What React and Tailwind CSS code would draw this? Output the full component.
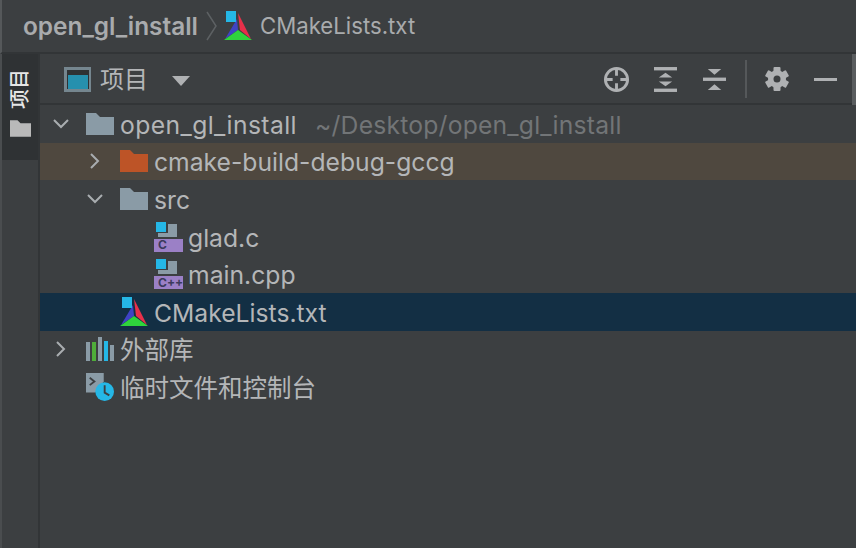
const cjk = '"Inter", "Noto Sans CJK SC", sans-serif';

function Chevron({ open }) {
  return (
    <svg width="18" height="18" viewBox="0 0 18 18" fill="none" stroke="#a9adb0" strokeWidth="2">
      {open ? <path d="M2 5l7 7 7-7" /> : <path d="M5 2l7 7-7 7" />}
    </svg>
  );
}

function Folder({ color = "#8a9ba6", w = 28, h = 22 }) {
  return (
    <svg width={w} height={h} viewBox="0 0 28 22">
      <path d="M0 0h10l4 4h14v18H0z" fill={color} />
    </svg>
  );
}

function CMakeIcon() {
  return (
    <svg width="28" height="30" viewBox="0 0 28 30">
      <path d="M13 8l1 11L1 28z" fill="#3f43c4" />
      <path d="M14 2l13 26-11-9z" fill="#e8304a" />
      <path d="M0 29l14-10 14 10z" fill="#2fd43c" />
      <rect x="2" y="0" width="10" height="11" fill="#25b7e6" />
    </svg>
  );
}

function SourceIcon({ label }) {
  return (
    <div className="relative w-[30px] h-[32px] top-[1px]">
      <div className="absolute left-[14px] top-[2px] w-[9px] h-[13px] bg-[#8a9ba6]" />
      <div className="absolute left-[4px] top-[11px] w-[19px] h-[4px] bg-[#8a9ba6]" />
      <div className="absolute left-[2px] top-0 w-[10px] h-[10px] bg-[#25b7e6]" />
      <div className="absolute left-0 top-[17px] w-[29px] h-[13px] bg-[#9b80c6] flex items-center pl-[4px] text-[12px] leading-none font-bold text-[#3b3a5c]">
        {label}
      </div>
    </div>
  );
}

function Gear() {
  return (
    <svg width="24" height="24" viewBox="0 0 24 24">
      <g fill="#afb1b3">
        <rect x="8.500" y="0" width="7" height="24" rx="1" />
        <rect x="8.500" y="0" width="7" height="24" rx="1" transform="rotate(60 12 12)" />
        <rect x="8.500" y="0" width="7" height="24" rx="1" transform="rotate(120 12 12)" />
        <circle cx="12" cy="12" r="9" />
      </g>
      <circle cx="12" cy="12" r="3.500" fill="#3c3f41" />
    </svg>
  );
}

function Row({ indent, chevron, icon, bg, children }) {
  return (
    <div className={`flex items-center h-[37.6px] ${bg || ""}`} style={{ paddingLeft: indent }}>
      <div className="w-[18px] h-[18px] mr-[16px] shrink-0">
        {chevron && <Chevron open={chevron === "open"} />}
      </div>
      <div className="w-[28px] flex justify-center shrink-0 mr-[6px]">{icon}</div>
      <div className="flex items-center pt-[3px]">{children}</div>
    </div>
  );
}

export default function App() {
  return (
    <div
      className="relative w-[856px] h-[548px] overflow-hidden bg-[#3c3f41] text-[#b4b6b8] text-[24.7px] flex flex-col"
      style={{ fontFamily: cjk }}
    >
      {/* breadcrumb */}
      <div className="h-[54px] shrink-0 flex items-center pl-[21px] border-b-2 border-[#323537] border-l-2 border-l-[#55585a]">
        <span className="font-semibold text-[24.400px] text-[#a9abad]">open_gl_install</span>
        <svg width="14" height="32" viewBox="0 0 14 32" fill="none" stroke="#5d6163" strokeWidth="1.5" className="ml-[7px] mr-[5px]">
          <path d="M2 2l9 14-9 14" />
        </svg>
        <CMakeIcon />
        <span className="ml-[8px] text-[22.200px] text-[#a9abad]">CMakeLists.txt</span>
      </div>

      <div className="flex flex-1 min-h-0">
        {/* side tool strip */}
        <div className="w-[40px] shrink-0 border-r-2 border-[#323537] border-l-2 border-l-[#4a4d4f]">
          <div className="h-[106px] bg-[#2f3234] flex flex-col items-center pt-[15px]">
            <span className="[writing-mode:vertical-rl] [text-orientation:sideways] rotate-180 text-[20px] leading-none text-[#e6e6e6] font-medium">
              项目
            </span>
            <div className="mt-[11px]">
              <Folder color="#b9b9b9" w={21} h={17} />
            </div>
          </div>
        </div>

        <div className="flex-1 min-w-0 flex flex-col">
          {/* toolbar */}
          <div className="h-[51px] shrink-0 flex items-center border-b-2 border-[#323537] pl-[24px] pt-[1px]">
            <div className="w-[27px] h-[25px] bg-[#75868f] flex items-center justify-center">
              <div className="w-[22px] h-[19px] bg-[#2f3234] flex items-end justify-center">
                <div className="w-[20px] h-[14px] bg-[#2690ae]" />
              </div>
            </div>
            <span className="ml-[9px] text-[24px] pt-[2px]">项目</span>
            <svg width="18" height="10" viewBox="0 0 18 10" className="ml-[24px] mt-[3px]">
              <path d="M0 0h18L9 10z" fill="#afb1b3" />
            </svg>
            <div className="ml-auto flex items-center">
              <svg width="27" height="27" viewBox="0 0 28 28" fill="none" stroke="#afb1b3" strokeWidth="3">
                <circle cx="14" cy="14" r="11.500" />
                <path d="M14 2v8M14 18v8M2 14h8M18 14h8" />
              </svg>
              <svg width="23" height="27" viewBox="0 0 24 28" fill="#afb1b3" className="ml-[24px]">
                <rect x="0" y="1" width="24" height="3.500" />
                <rect x="0" y="23.500" width="24" height="3.500" />
                <path d="M12 7l7 5H5zM12 21l7-5H5z" />
              </svg>
              <svg width="23" height="27" viewBox="0 0 24 28" fill="#afb1b3" className="ml-[26px]">
                <rect x="0" y="12" width="24" height="3.500" />
                <path d="M5 3h14l-7 6zM5 25h14l-7-6z" />
              </svg>
              <div className="w-[2px] h-[38px] bg-[#55585a] ml-[19px]" />
              <div className="ml-[18px]">
                <Gear />
              </div>
              <div className="w-[23px] h-[3px] bg-[#afb1b3] ml-[25px] mr-[19px]" />
            </div>
          </div>

          {/* project tree */}
          <div className="flex flex-col">
            <Row indent={12} chevron="open" icon={<Folder />}>
              <span className="tracking-[0.4px]">open_gl_install</span>
              <span className="ml-[18px] tracking-[0.2px] text-[#727577]">~/Desktop/open_gl_install</span>
            </Row>
            <Row indent={46} chevron="closed" bg="bg-[#4f483f]" icon={<Folder color="#bd5427" />}>
              <span>cmake-build-debug-gccg</span>
            </Row>
            <Row indent={46} chevron="open" icon={<Folder />}>
              <span>src</span>
            </Row>
            <Row indent={80} icon={<SourceIcon label="C" />}>
              <span>glad.c</span>
            </Row>
            <Row indent={80} icon={<SourceIcon label="C++" />}>
              <span>main.cpp</span>
            </Row>
            <Row indent={46} bg="bg-[#132f44]" icon={<CMakeIcon />}>
              <span>CMakeLists.txt</span>
            </Row>
            <Row
              indent={12}
              chevron="closed"
              icon={
                <svg width="28" height="24" viewBox="0 0 28 24">
                  <rect x="0" y="5" width="4" height="19" fill="#8a9ba6" />
                  <rect x="6" y="5" width="4" height="19" fill="#4fae3a" />
                  <rect x="12" y="0" width="4" height="24" fill="#8a9ba6" />
                  <rect x="18" y="4" width="4" height="20" fill="#25b7e6" />
                  <rect x="24" y="8" width="4" height="16" fill="#8a9ba6" />
                </svg>
              }
            >
              <span className="text-[24.500px]">外部库</span>
            </Row>
            <Row
              indent={12}
              icon={
                <svg width="30" height="30" viewBox="0 0 30 30" fill="none">
                  <path d="M0 0h19v9l-9 12H0z" fill="#8a9ba6" />
                  <path d="M4 5l5 4-5 4" stroke="#3c3f41" strokeWidth="2" />
                  <circle cx="20" cy="20" r="10" fill="#25b7e6" />
                  <path d="M20 13v8l5 3" stroke="#3c3f41" strokeWidth="2" />
                </svg>
              }
            >
              <span className="text-[24.500px]">临时文件和控制台</span>
            </Row>
          </div>
        </div>
      </div>

      {/* scrollbar thumb */}
      <div className="absolute right-0 top-[54px] w-[4px] h-[51px] bg-[#5a5d5f]" />
    </div>
  );
}
